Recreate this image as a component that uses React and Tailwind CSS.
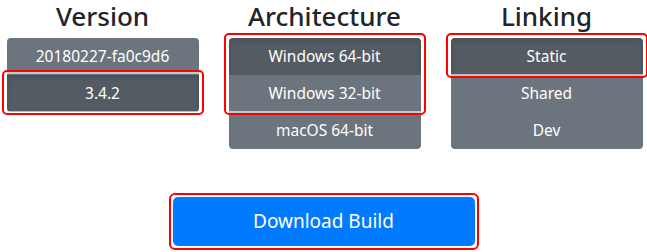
import React from "react";

const columns = [
  {
    title: "Version",
    options: ["20180227-fa0c9d6", "3.4.2"],
    active: 1,
    mark: [1, 1],
  },
  {
    title: "Architecture",
    options: ["Windows 64-bit", "Windows 32-bit", "macOS 64-bit"],
    active: 0,
    mark: [0, 1],
  },
  {
    title: "Linking",
    options: ["Static", "Shared", "Dev"],
    active: 0,
    mark: [0, 0],
  },
];

const ROW = 37;

function Column({ col }) {
  const [from, to] = col.mark;
  return (
    <div className="flex w-[192px] flex-col items-center">
      <h2 className="h-[38px] text-[26px] leading-[32px] font-medium text-[#212529]">
        {col.title}
      </h2>
      <div className="relative w-full">
        <div className="flex flex-col overflow-hidden rounded-[4px]">
          {col.options.map((opt, i) => (
            <div
              key={opt}
              className={`flex h-[37px] items-center justify-center text-[15.5px] text-white ${
                i === col.active
                  ? "bg-[#545b62] shadow-[inset_0_3px_5px_rgba(0,0,0,0.125)]"
                  : "bg-[#6c757d]"
              }`}
            >
              {opt}
            </div>
          ))}
        </div>
        <div
          className="pointer-events-none absolute -left-[5px] -right-[5px] rounded-[5px] border-2 border-[#ff0000] shadow-[inset_0_0_0_2px_rgba(255,255,255,0.6)]"
          style={{ top: from * ROW - 5, height: (to - from + 1) * ROW + 8 }}
        />
      </div>
    </div>
  );
}

export default function App() {
  return (
    <div
      className="flex h-[252px] w-[647px] flex-col items-center bg-white"
      style={{ fontFamily: '"Noto Sans", "Open Sans", sans-serif' }}
    >
      <div className="flex w-full items-start justify-center gap-[30px] pl-[2px]">
        {columns.map((c) => (
          <Column key={c.title} col={c} />
        ))}
      </div>
      <div className="relative mt-auto mb-[6px]">
        <button className="flex h-[49px] w-[302px] items-center justify-center rounded-[5px] bg-[#007bff] text-[19px] text-white">
          Download Build
        </button>
        <div className="pointer-events-none absolute -inset-[4px] rounded-[6px] border-2 border-[#ff0000] shadow-[inset_0_0_0_2px_rgba(255,255,255,0.6)]" />
      </div>
    </div>
  );
}
